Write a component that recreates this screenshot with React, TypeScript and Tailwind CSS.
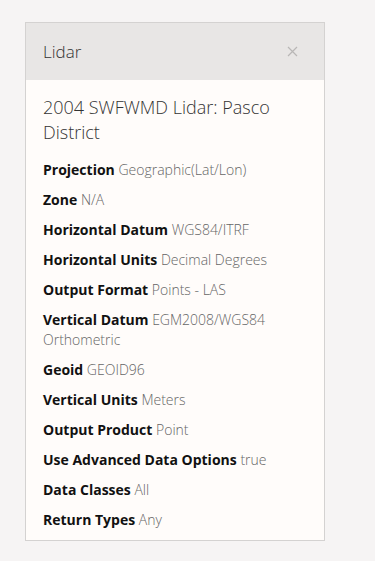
const rows: [string, string][] = [
  ['Projection', 'Geographic(Lat/Lon)'],
  ['Zone', 'N/A'],
  ['Horizontal Datum', 'WGS84/ITRF'],
  ['Horizontal Units', 'Decimal Degrees'],
  ['Output Format', 'Points - LAS'],
  ['Vertical Datum', 'EGM2008/WGS84 Orthometric'],
  ['Geoid', 'GEOID96'],
  ['Vertical Units', 'Meters'],
  ['Output Product', 'Point'],
  ['Use Advanced Data Options', 'true'],
  ['Data Classes', 'All'],
  ['Return Types', 'Any'],
]

export default function App() {
  return (
    <div className="min-h-[561px] bg-[#f6f4f4] pt-[22px] pl-[25px] font-['Open_Sans',sans-serif]">
      <div className="w-[300px] border border-[#d4d2d1] bg-[#fffcfa]">
        <div className="flex h-[57px] items-center justify-between bg-[#e8e6e5] pl-[17px] pr-[26px]">
          <span className="text-[17px] font-light text-[#333]">Lidar</span>
          <svg width="11" height="11" viewBox="0 0 11 11" className="text-[#b9b7b6]">
            <path d="M1 1L10 10M10 1L1 10" stroke="currentColor" strokeWidth="1.2" />
          </svg>
        </div>
        <div className="px-[17px] pt-[15px]">
          <h2 className="mb-[15px] text-[18px] leading-[25px] font-light text-[#333]">
            2004 SWFWMD Lidar: Pasco District
          </h2>
          {rows.map(([k, v]) => (
            <p key={k} className="mb-[10px] text-[14px] leading-[20px] text-[#666]">
              <span className="font-bold text-[#111]">{k}</span>{' '}
              <span className="font-light">{v}</span>
            </p>
          ))}
        </div>
      </div>
    </div>
  )
}
